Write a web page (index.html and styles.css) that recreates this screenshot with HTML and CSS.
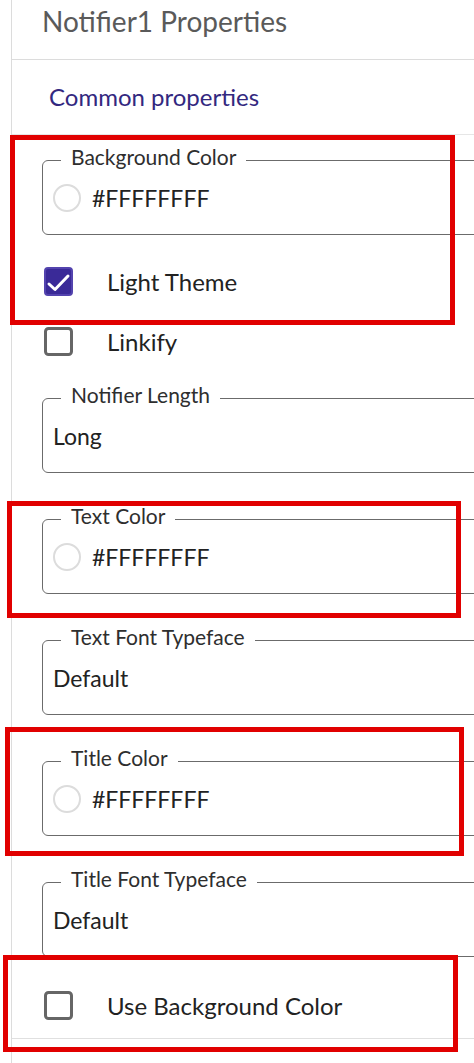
FILE: index.html
```html
<!DOCTYPE html>
<html lang="en">
<head>
<meta charset="utf-8">
<title>Notifier1 Properties</title>
<link rel="stylesheet" href="styles.css">
</head>
<body>
<div class="page">
  <div class="panel">
    <header class="panel-head">
      <h1 class="panel-title">Notifier1 Properties</h1>
    </header>
    <div class="section-head">
      <h2 class="section-title">Common properties</h2>
    </div>
    <div class="props">
      <fieldset class="field field-first">
        <legend class="field-label">Background Color</legend>
        <div class="field-value"><span class="swatch"></span><span>#FFFFFFFF</span></div>
      </fieldset>

      <label class="check-row check-after-field">
        <svg class="checkbox" width="29" height="29" viewBox="0 0 29 29"><rect x="1" y="1" width="27" height="27" rx="3" fill="#3a2a98" stroke="#5343ae" stroke-width="2"/><polyline points="5,17 11,22.5 24,9" fill="none" stroke="#fff" stroke-width="3" stroke-linecap="round" stroke-linejoin="round"/></svg>
        <span>Light Theme</span>
      </label>
      <label class="check-row">
        <svg class="checkbox" width="29" height="29" viewBox="0 0 29 29"><rect x="1.5" y="1.5" width="26" height="26" rx="3" fill="#fff" stroke="#666" stroke-width="3"/></svg>
        <span>Linkify</span>
      </label>

      <fieldset class="field field-after-check">
        <legend class="field-label">Notifier Length</legend>
        <div class="field-value"><span>Long</span></div>
      </fieldset>

      <fieldset class="field">
        <legend class="field-label">Text Color</legend>
        <div class="field-value"><span class="swatch"></span><span>#FFFFFFFF</span></div>
      </fieldset>

      <fieldset class="field">
        <legend class="field-label">Text Font Typeface</legend>
        <div class="field-value"><span>Default</span></div>
      </fieldset>

      <fieldset class="field">
        <legend class="field-label">Title Color</legend>
        <div class="field-value"><span class="swatch"></span><span>#FFFFFFFF</span></div>
      </fieldset>

      <fieldset class="field">
        <legend class="field-label">Title Font Typeface</legend>
        <div class="field-value"><span>Default</span></div>
      </fieldset>

      <label class="check-row check-last">
        <svg class="checkbox" width="29" height="29" viewBox="0 0 29 29"><rect x="1.5" y="1.5" width="26" height="26" rx="3" fill="#fff" stroke="#666" stroke-width="3"/></svg>
        <span>Use Background Color</span>
      </label>
    </div>
  </div>

  <div class="mark mark-1"></div>
  <div class="mark mark-2"></div>
  <div class="mark mark-3"></div>
  <div class="mark mark-4"></div>
</div>
</body>
</html>
```

FILE: styles.css
```css
html, body {
  margin: 0;
  padding: 0;
  background: #fff;
}

body {
  font-family: "Lato", "Open Sans", sans-serif;
  color: #222;
  overflow: hidden;
}

.page {
  position: relative;
  width: 474px;
  height: 1063px;
  overflow: hidden;
}

.panel {
  margin-left: 11px;
  border-left: 1px solid #dcdcdc;
  height: 1063px;
}

.panel-head {
  box-sizing: border-box;
  height: 60px;
  border-bottom: 1px solid #dcdcdc;
  padding: 4px 0 0 30px;
}

.panel-title {
  margin: 0;
  font-size: 28px;
  line-height: 34px;
  font-weight: 400;
  color: #5a5a5a;
}

.section-head {
  box-sizing: border-box;
  height: 75px;
  border-bottom: 1px solid #e6e6e6;
  display: flex;
  align-items: center;
  padding-left: 37px;
}

.section-title {
  margin: 0;
  font-size: 24px;
  line-height: 30px;
  font-weight: 400;
  color: #33287f;
}

.props {
  display: flex;
  flex-direction: column;
  padding-bottom: 2.5px;
  border-bottom: 1px solid #e0e0e0;
}

.field {
  margin: 31px 0 0 30px;
  padding: 0 10px 14px;
  width: 520px;
  min-width: 0;
  border: 1.5px solid #6b6b6b;
  border-radius: 6px;
  flex: none;
}

.field-first {
  margin-top: 10px;
}

.field-after-check {
  margin-top: 12px;
}

.field-label {
  margin-left: 8px;
  padding: 0 10px 6px;
  font-size: 21px;
  line-height: 24px;
  color: #2e2e2e;
}

.field-value {
  height: 45px;
  display: flex;
  align-items: center;
  gap: 11px;
  font-size: 23px;
  color: #222;
}

.swatch {
  box-sizing: border-box;
  width: 28px;
  height: 28px;
  border: 2px solid #dcdcdc;
  border-radius: 50%;
  background: #fff;
  flex: none;
}

.check-row {
  height: 60px;
  display: flex;
  align-items: center;
  gap: 34px;
  padding-left: 32px;
  font-size: 24px;
  color: #222;
  flex: none;
}

.check-after-field {
  margin-top: 16px;
}

.check-last {
  margin-top: 18px;
}

.checkbox {
  display: block;
  flex: none;
}

.mark {
  position: absolute;
  box-sizing: border-box;
  border: 5px solid #e10000;
  pointer-events: none;
}

.mark-1 { left: 10px; top: 135px; width: 445px; height: 190px; }
.mark-2 { left: 7px; top: 501px; width: 454px; height: 117px; }
.mark-3 { left: 5px; top: 727px; width: 459px; height: 129px; }
.mark-4 { left: 3px; top: 955px; width: 455px; height: 97px; }
```
